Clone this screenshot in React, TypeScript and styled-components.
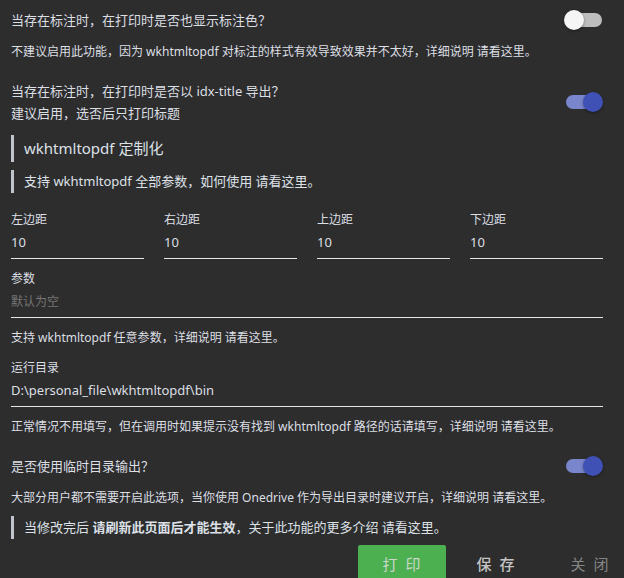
import styled, { createGlobalStyle } from 'styled-components';

const GlobalStyle = createGlobalStyle`
  html, body {
    margin: 0;
    padding: 0;
    background: #2d2d2d;
  }
  body {
    font-family: 'Noto Sans', 'Noto Sans CJK SC', sans-serif;
    color: #dcdfe4;
    overflow: hidden;
  }
`;

const Page = styled.div`
  width: 624px;
  height: 578px;
  box-sizing: border-box;
  padding: 10px 21px 0 11px;
  overflow: hidden;
`;

const SwitchRow = styled.div<{ $top?: number }>`
  display: flex;
  justify-content: space-between;
  align-items: center;
  margin-top: ${(p) => p.$top ?? 0}px;
`;

const SwitchText = styled.div`
  display: flex;
  flex-direction: column;
`;

const Title = styled.div<{ $lh?: number }>`
  font-size: 13px;
  line-height: ${(p) => p.$lh ?? 20}px;
`;

const Hint = styled.div<{ $top?: number }>`
  font-size: 12px;
  line-height: 18px;
  margin-top: ${(p) => p.$top ?? 0}px;
`;

const Track = styled.div<{ $on: boolean }>`
  position: relative;
  width: 36px;
  height: 14px;
  border-radius: 7px;
  margin-right: 1px;
  background: ${(p) => (p.$on ? '#7986cb' : '#bdbdbd')};
`;

const Thumb = styled.div<{ $on: boolean }>`
  position: absolute;
  top: -3px;
  left: ${(p) => (p.$on ? '17px' : '-2px')};
  width: 20px;
  height: 20px;
  border-radius: 50%;
  background: ${(p) => (p.$on ? '#3f51b5' : '#f5f5f5')};
  box-shadow: 0 1px 3px rgba(0, 0, 0, 0.4);
`;

const Quote = styled.div<{ $top: number; $size: number; $h: number }>`
  border-left: 3px solid #c0c4cc;
  padding-left: 10px;
  margin-top: ${(p) => p.$top}px;
  font-size: ${(p) => p.$size}px;
  line-height: ${(p) => p.$h}px;
  color: #dde1e8;

  b {
    font-weight: 700;
  }
`;

const MarginGrid = styled.div`
  display: grid;
  grid-template-columns: repeat(4, 133px);
  column-gap: 20px;
  margin-top: 18px;
`;

const Field = styled.div<{ $top?: number }>`
  display: flex;
  flex-direction: column;
  margin-top: ${(p) => p.$top ?? 0}px;
`;

const Label = styled.label`
  font-size: 12px;
  line-height: 18px;
  color: #dcdfe4;
`;

const Input = styled.input`
  margin-top: 3px;
  padding: 0 0 6px 0;
  border: none;
  border-bottom: 1px solid #e6e6e6;
  background: transparent;
  font-family: inherit;
  font-size: 13px;
  line-height: 20px;
  height: 27px;
  box-sizing: border-box;
  color: #dcdfe4;
  outline: none;

  &::placeholder {
    font-size: 12px;
    color: #757575;
  }
`;

const ButtonBar = styled.div`
  display: flex;
  justify-content: flex-end;
  gap: 6px;
  margin-top: 6px;
  margin-right: -31px;
`;

const Button = styled.button<{ $variant: 'primary' | 'text' | 'muted' }>`
  width: 88px;
  height: 36px;
  border: none;
  border-radius: 2px;
  font-family: inherit;
  font-size: 15px;
  letter-spacing: 1px;
  word-spacing: 2px;
  background: ${(p) => (p.$variant === 'primary' ? '#4caf50' : 'transparent')};
  color: ${(p) =>
    p.$variant === 'primary' ? '#c9d6c9' : p.$variant === 'text' ? '#c4c4c4' : '#858585'};
  font-weight: ${(p) => (p.$variant === 'text' ? 500 : 400)};
`;

const Switch = ({ on }: { on: boolean }) => (
  <Track $on={on}>
    <Thumb $on={on} />
  </Track>
);

export default function App() {
  return (
    <>
      <GlobalStyle />
      <Page>
        <SwitchRow>
          <Title>当存在标注时，在打印时是否也显示标注色？</Title>
          <Switch on={false} />
        </SwitchRow>
        <Hint $top={13}>
          不建议启用此功能，因为 wkhtmltopdf 对标注的样式有效导致效果并不太好，详细说明 请看这里。
        </Hint>

        <SwitchRow $top={19}>
          <SwitchText>
            <Title $lh={22}>当存在标注时，在打印时是否以 idx-title 导出？</Title>
            <Title $lh={22}>建议启用，选否后只打印标题</Title>
          </SwitchText>
          <Switch on />
        </SwitchRow>

        <Quote $top={11} $size={15} $h={27}>
          wkhtmltopdf 定制化
        </Quote>
        <Quote $top={8} $size={13} $h={23}>
          支持 wkhtmltopdf 全部参数，如何使用 请看这里。
        </Quote>

        <MarginGrid>
          {['左边距', '右边距', '上边距', '下边距'].map((name) => (
            <Field key={name}>
              <Label>{name}</Label>
              <Input defaultValue="10" />
            </Field>
          ))}
        </MarginGrid>

        <Field $top={11}>
          <Label>参数</Label>
          <Input placeholder="默认为空" />
        </Field>
        <Hint $top={11}>支持 wkhtmltopdf 任意参数，详细说明 请看这里。</Hint>

        <Field $top={12}>
          <Label>运行目录</Label>
          <Input defaultValue="D:\personal_file\wkhtmltopdf\bin" />
        </Field>
        <Hint $top={11}>
          正常情况不用填写，但在调用时如果提示没有找到 wkhtmltopdf 路径的话请填写，详细说明 请看这里。
        </Hint>

        <SwitchRow $top={20}>
          <Title>是否使用临时目录输出？</Title>
          <Switch on />
        </SwitchRow>
        <Hint $top={13}>
          大部分用户都不需要开启此选项，当你使用 Onedrive 作为导出目录时建议开启，详细说明 请看这里。
        </Hint>

        <Quote $top={9} $size={13} $h={23}>
          当修改完后 <b>请刷新此页面后才能生效</b>，关于此功能的更多介绍 请看这里。
        </Quote>

        <ButtonBar>
          <Button $variant="primary">打 印</Button>
          <Button $variant="text">保 存</Button>
          <Button $variant="muted">关 闭</Button>
        </ButtonBar>
      </Page>
    </>
  );
}
